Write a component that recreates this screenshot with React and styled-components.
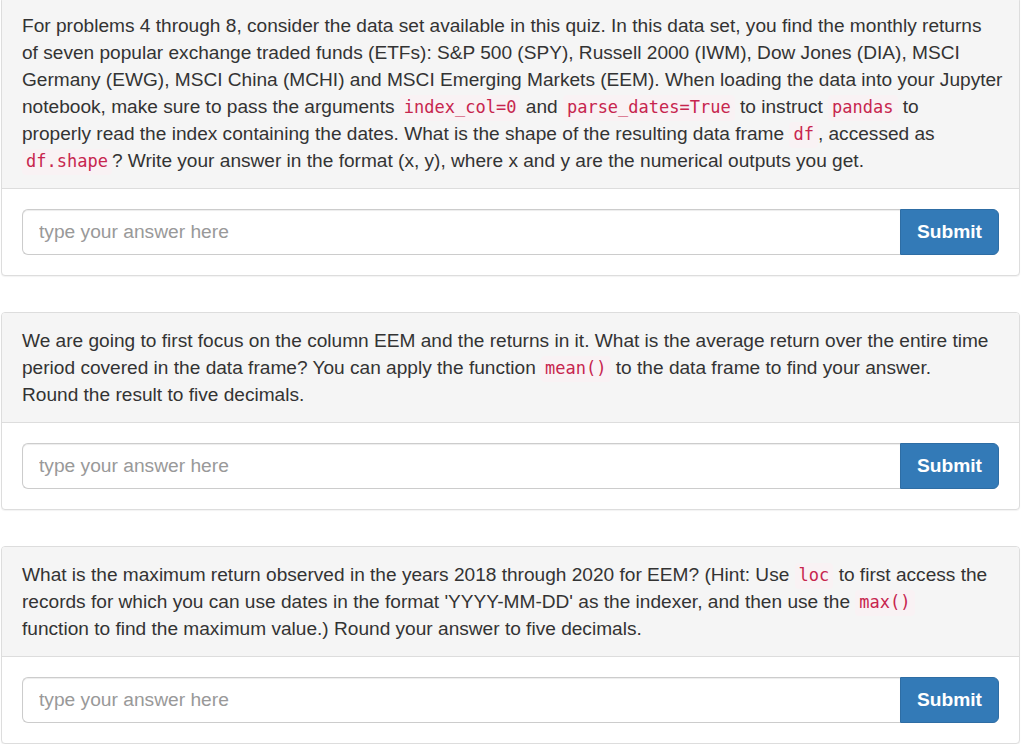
import React from "react";
import styled, { createGlobalStyle } from "styled-components";

const Global = createGlobalStyle`
  html, body { margin: 0; padding: 0; background: #fff; }
  body {
    font-family: "Liberation Sans", Arial, Helvetica, sans-serif;
    color: #333;
    overflow: hidden;
  }
  * { box-sizing: border-box; }
`;

const Page = styled.div`
  display: flex;
  flex-direction: column;
  gap: 36px;
  width: 1019px;
  margin: -3px 0 0 1px;
`;

const Panel = styled.section`
  border: 1px solid #ddd;
  border-radius: 4px;
  background: #fff;
  box-shadow: 0 1px 1px rgba(0, 0, 0, 0.05);
  overflow: hidden;
`;

const Heading = styled.div`
  background: #f5f5f5;
  border-bottom: 1px solid #ddd;
  padding: 14px 20px;
  font-size: 19.1px;
  line-height: 27px;
  color: #333;
  white-space: nowrap;
`;

const Code = styled.code`
  font-family: "DejaVu Sans Mono", Menlo, monospace;
  font-size: 17px;
  line-height: 1;
  color: #c7254e;
  background: #f9f2f4;
  padding: 2px 4px 4px;
  border-radius: 4px;
`;

const Body = styled.div`
  padding: 20px;
`;

const InputGroup = styled.form`
  display: flex;
  height: 46px;
`;

const Input = styled.input`
  flex: 1;
  min-width: 0;
  height: 46px;
  padding: 10px 16px;
  font-family: "Liberation Sans", Arial, Helvetica, sans-serif;
  font-size: 19.2px;
  color: #555;
  border: 1px solid #ccc;
  border-right: none;
  border-radius: 6px 0 0 6px;
  box-shadow: inset 0 1px 1px rgba(0, 0, 0, 0.075);
  outline: none;
  &::placeholder { color: #999; }
`;

const Button = styled.button`
  height: 46px;
  padding: 10px 16px;
  font-family: "Liberation Sans", Arial, Helvetica, sans-serif;
  font-size: 19.2px;
  font-weight: bold;
  line-height: 1;
  color: #fff;
  background: #337ab7;
  border: 1px solid #2e6da4;
  border-radius: 0 6px 6px 0;
  cursor: pointer;
`;

const Question = ({ children }) => (
  <Panel>
    <Heading>{children}</Heading>
    <Body>
      <InputGroup onSubmit={(e) => e.preventDefault()}>
        <Input type="text" placeholder="type your answer here" />
        <Button type="submit">Submit</Button>
      </InputGroup>
    </Body>
  </Panel>
);

export default function App() {
  return (
    <>
      <Global />
      <Page>
        <Question>
          For problems 4 through 8, consider the data set available in this quiz. In this data set, you find the monthly returns
          <br />
          of seven popular exchange traded funds (ETFs): S&amp;P 500 (SPY), Russell 2000 (IWM), Dow Jones (DIA), MSCI
          <br />
          Germany (EWG), MSCI China (MCHI) and MSCI Emerging Markets (EEM). When loading the data into your Jupyter
          <br />
          notebook, make sure to pass the arguments <Code>index_col=0</Code> and <Code>parse_dates=True</Code> to instruct{" "}
          <Code>pandas</Code> to
          <br />
          properly read the index containing the dates. What is the shape of the resulting data frame <Code>df</Code>, accessed as
          <br />
          <Code>df.shape</Code>? Write your answer in the format (x, y), where x and y are the numerical outputs you get.
        </Question>
        <Question>
          We are going to first focus on the column EEM and the returns in it. What is the average return over the entire time
          <br />
          period covered in the data frame? You can apply the function <Code>mean()</Code> to the data frame to find your answer.
          <br />
          Round the result to five decimals.
        </Question>
        <Question>
          What is the maximum return observed in the years 2018 through 2020 for EEM? (Hint: Use <Code>loc</Code> to first access the
          <br />
          records for which you can use dates in the format 'YYYY-MM-DD' as the indexer, and then use the <Code>max()</Code>
          <br />
          function to find the maximum value.) Round your answer to five decimals.
        </Question>
      </Page>
    </>
  );
}
